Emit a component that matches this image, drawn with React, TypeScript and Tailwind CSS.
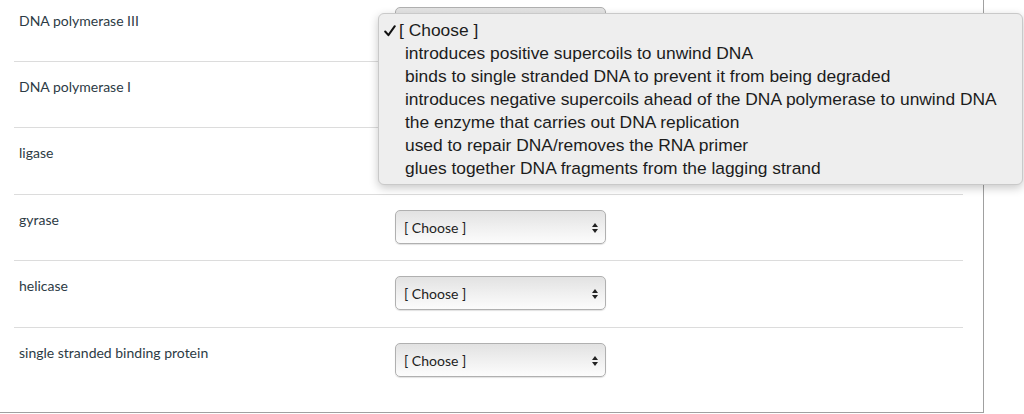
import React from "react";

const labels = [
  "DNA polymerase III",
  "DNA polymerase I",
  "ligase",
  "gyrase",
  "helicase",
  "single stranded binding protein",
];

const options = [
  "introduces positive supercoils to unwind DNA",
  "binds to single stranded DNA to prevent it from being degraded",
  "introduces negative supercoils ahead of the DNA polymerase to unwind DNA",
  "the enzyme that carries out DNA replication",
  "used to repair DNA/removes the RNA primer",
  "glues together DNA fragments from the lagging strand",
];

function SelectBox({ className = "" }: { className?: string }) {
  return (
    <div
      className={
        "relative w-[211px] h-[34px] rounded-[5px] border border-[#b0b0b0] bg-[linear-gradient(to_bottom,#e2e2e2,#f1f1f1_55%,#fcfcfc)] shadow-[0_1px_1px_rgba(0,0,0,0.12)] flex items-center pl-[8px] text-[14px] text-[#222] " +
        className
      }
    >
      <span>[ Choose ]</span>
      <svg
        className="absolute right-[7px] top-[12px]"
        width="6"
        height="10"
        viewBox="0 0 6 10"
      >
        <path d="M3 0 L6 4 L0 4 Z" fill="#222" />
        <path d="M0 6 L6 6 L3 10 Z" fill="#222" />
      </svg>
    </div>
  );
}

export default function App() {
  const heights = ["h-[61px]", "h-[66px]", "h-[67px]", "h-[66px]", "h-[67px]", "h-[85px]"];
  return (
    <div className="relative w-[984px] h-[413px] bg-white border-r border-b border-[#a0a0a0] font-['Lato',sans-serif] overflow-visible">
      <div className="ml-[14px] mr-[20px]">
        {labels.map((l, i) => (
          <div
            key={l}
            className={
              "flex items-start box-border " +
              heights[i] +
              (i === 0 ? " pt-[11px]" : " border-t border-[#dcdcdc] pt-[15px]")
            }
          >
            <div className="w-[381px] shrink-0 pl-[5px] text-[14px] leading-[20px] text-[#2d3b45]">
              {l}
            </div>
            <SelectBox className={i === 0 ? "-mt-[4px]" : ""} />
          </div>
        ))}
      </div>

      <div className="absolute left-[378px] top-[13px] w-[645px] h-[172px] rounded-[6px] bg-[#eeeeee] border border-[#c9c9c9] shadow-[0_3px_10px_rgba(0,0,0,0.22)] pt-[5px] font-['Liberation_Sans',Arial,sans-serif] text-[17.4px] leading-[23px] text-[#1c1c1c]">
        <div className="flex items-center pl-[5px]">
          <svg width="12" height="12" viewBox="0 0 12 12" className="mr-[3px]">
            <path d="M1.2 6.5 L4.4 10.2 L10.8 1.2" fill="none" stroke="#111" strokeWidth="2" strokeLinecap="round" strokeLinejoin="round" />
          </svg>
          <span>[ Choose ]</span>
        </div>
        {options.map((o) => (
          <div key={o} className="pl-[26px] whitespace-nowrap">
            {o}
          </div>
        ))}
      </div>
    </div>
  );
}
